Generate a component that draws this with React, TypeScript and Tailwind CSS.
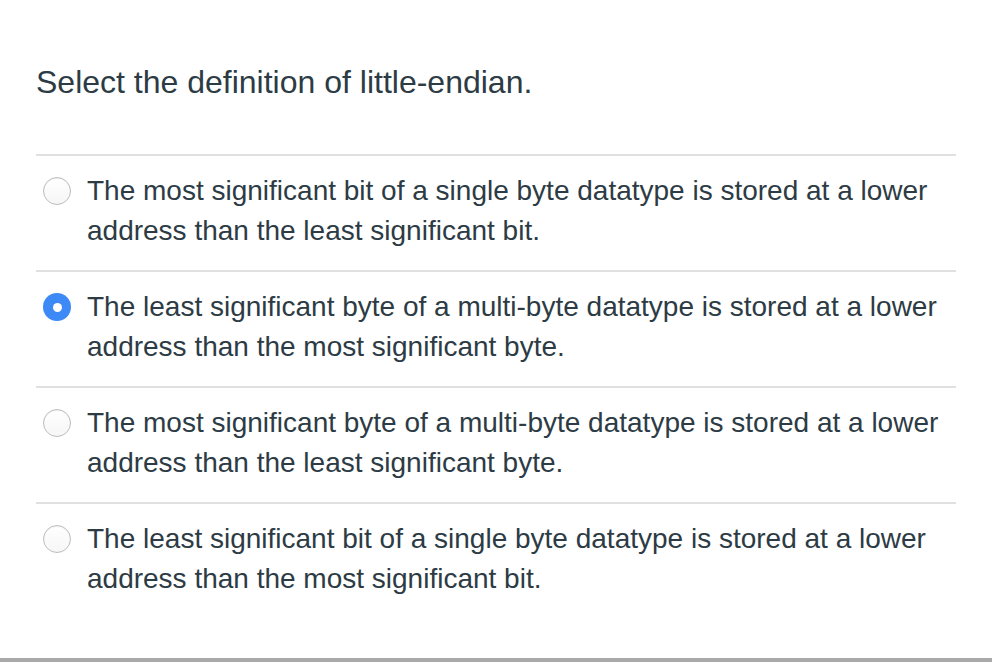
const options = [
  {
    id: 1,
    text: "The most significant bit of a single byte datatype is stored at a lower address than the least significant bit.",
    selected: false,
  },
  {
    id: 2,
    text: "The least significant byte of a multi-byte datatype is stored at a lower address than the most significant byte.",
    selected: true,
  },
  {
    id: 3,
    text: "The most significant byte of a multi-byte datatype is stored at a lower address than the least significant byte.",
    selected: false,
  },
  {
    id: 4,
    text: "The least significant bit of a single byte datatype is stored at a lower address than the most significant bit.",
    selected: false,
  },
]

function Radio({ checked }: { checked: boolean }) {
  if (checked) {
    return (
      <span className="flex h-[28px] w-[28px] shrink-0 items-center justify-center rounded-full bg-[#3d8af7]">
        <span className="h-[9px] w-[9px] rounded-full bg-white" />
      </span>
    )
  }
  return (
    <span className="h-[28px] w-[28px] shrink-0 rounded-full border border-[#bdbdbd] bg-gradient-to-b from-white to-[#f6f6f6] shadow-[inset_0_1px_1px_rgba(0,0,0,0.06)]" />
  )
}

export default function App() {
  return (
    <div className="h-[662px] w-[992px] bg-white font-['Liberation_Sans',Arial,sans-serif] text-[#2d3b45] flex flex-col">
      <div className="flex-1 px-9">
        <p className="mt-[62px] text-[32px] leading-[40px]">Select the definition of little-endian.</p>
        <div className="mt-[52px] w-[920px] border-t-2 border-[#e0e0e0]">
          {options.map((o) => (
            <label
              key={o.id}
              className="flex items-start border-b-2 border-[#e0e0e0] pt-[15px] pb-[19px] last:border-b-0"
            >
              <span className="flex h-[40px] w-[51px] shrink-0 items-center pl-[7px]">
                <Radio checked={o.selected} />
              </span>
              <span className="text-[28px] leading-[40px]">{o.text}</span>
            </label>
          ))}
        </div>
      </div>
      <div className="h-[4px] bg-[#a9a9a9]" />
    </div>
  )
}
